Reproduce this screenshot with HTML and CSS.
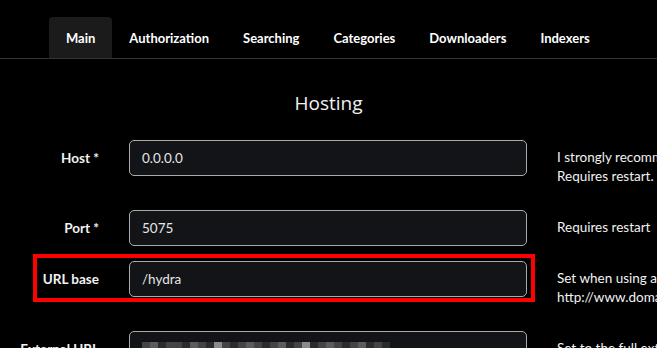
FILE: index.html
```html
<!DOCTYPE html>
<html lang="en">

<head>
    <meta charset="UTF-8">
    <meta name="viewport" content="width=device-width, initial-scale=1.0">
    <title>Config - Main</title>
    <link rel="stylesheet" href="styles.css">
</head>

<body>
    <nav class="tabs">
        <a class="tab active">Main</a>
        <a class="tab">Authorization</a>
        <a class="tab">Searching</a>
        <a class="tab">Categories</a>
        <a class="tab">Downloaders</a>
        <a class="tab">Indexers</a>
    </nav>

    <main>
        <h2 class="section-title">Hosting</h2>

        <div class="form-group">
            <label>Host *</label>
            <div class="input">0.0.0.0</div>
            <div class="help">I strongly recommend using a reverse proxy in front of this service.<br>Requires restart.</div>
        </div>

        <div class="form-group">
            <label>Port *</label>
            <div class="input">5075</div>
            <div class="help">Requires restart</div>
        </div>

        <div class="form-group marked">
            <label>URL base</label>
            <div class="input">/hydra</div>
            <div class="help">Set when using an external proxy. Call using<br>http://www.domain.com/hydra</div>
        </div>

        <div class="form-group">
            <label>External URL</label>
            <div class="input">
                <!-- blurred in the screenshot -->
                <div class="blur">
                    <span class="b2"></span><span class="b3"></span><span class="b1"></span><span class="b2"></span>
                    <span class="b2"></span><span class="b1"></span><span class="b3"></span><span class="b2"></span>
                    <span class="b1"></span><span class="b4"></span><span class="b2"></span><span class="b1"></span>
                    <span class="b2"></span><span class="b3"></span><span class="b2"></span><span class="b1"></span>
                    <span class="b2"></span><span class="b3"></span><span class="b1"></span><span class="b2"></span>
                    <span class="b4"></span><span class="b1"></span><span class="b2"></span><span class="b3"></span>
                    <span class="b2"></span><span class="b1"></span><span class="b2"></span><span class="b3"></span>
                    <span class="b1"></span><span class="b2"></span><span class="b1"></span>
                </div>
            </div>
            <div class="help">Set to the full external URL so links are generated correctly.</div>
        </div>
    </main>
</body>

</html>
```

FILE: styles.css
```css
html,
body {
    margin: 0;
    background-color: #000;
    color: #eee;
    font-family: Lato, "Open Sans", sans-serif;
    overflow: hidden;
}

.tabs {
    display: flex;
    padding: 17px 0 0 49px;
    border-bottom: 1px solid #333;
}

.tab {
    height: 41px;
    line-height: 42px;
    padding: 0 17px;
    font-size: 13px;
    font-weight: bold;
    color: #fff;
    border-radius: 4px 4px 0 0;
    cursor: pointer;
}

.tab.active {
    background-color: #1b1b1b;
}

main {
    display: flex;
    flex-direction: column;
}

.section-title {
    margin: 30px 0 23px;
    width: 657px;
    text-align: center;
    font-family: "Open Sans", sans-serif;
    font-size: 19px;
    font-weight: normal;
    line-height: 28px;
    color: #f2f2f2;
}

.form-group {
    position: relative;
    display: flex;
    align-items: flex-start;
    margin-bottom: 15px;
}

.form-group label {
    flex: none;
    width: 99px;
    padding-right: 30px;
    text-align: right;
    font-size: 13.5px;
    font-weight: bold;
    line-height: 36px;
    color: #f2f2f2;
}

.input {
    flex: none;
    box-sizing: border-box;
    width: 398px;
    height: 36px;
    padding: 0 12px;
    line-height: 34px;
    font-size: 13.5px;
    color: #e6e6e6;
    background-color: #131417;
    border: 1px solid #aaa;
    border-radius: 5px;
    overflow: hidden;
}

.help {
    flex: none;
    margin-left: 30px;
    padding: 8px 0 9px;
    font-size: 13.5px;
    line-height: 19px;
    color: #f2f2f2;
    white-space: nowrap;
}

/* red box drawn over the screenshot */
.marked::after {
    content: "";
    position: absolute;
    left: 33px;
    top: -7px;
    width: 502px;
    height: 48px;
    box-sizing: border-box;
    border: 4px solid #f00;
}

.blur {
    display: flex;
    margin-top: 10px;
}

.blur span {
    width: 8px;
    height: 8px;
}

.b1 { background-color: #2b2b2d; }
.b2 { background-color: #444446; }
.b3 { background-color: #5c5c5e; }
.b4 { background-color: #8a8a8c; }
```
